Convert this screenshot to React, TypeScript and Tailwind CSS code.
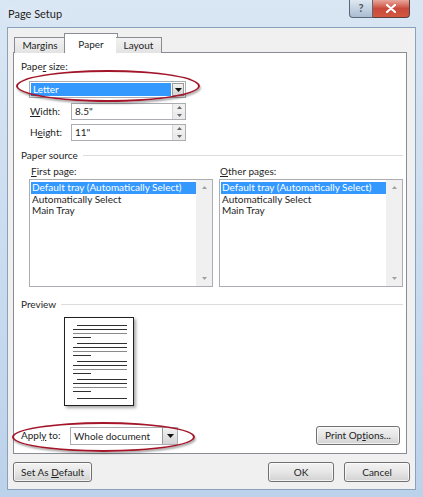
import React from 'react';

const btn =
  'flex items-center justify-center whitespace-nowrap rounded-[3px] border border-[#707070] bg-linear-to-b from-[#f3f3f3] via-[#e6e6e6] to-[#d2d2d2] text-[#1e1e1e] shadow-[inset_0_0_0_1px_rgba(255,255,255,0.7)]';

function DropArrow() {
  return (
    <svg width="7" height="4" viewBox="0 0 7 4">
      <path d="M0 0h7L3.5 4z" fill="#111" />
    </svg>
  );
}

function SpinBox({ value }: { value: string }) {
  return (
    <div className="flex h-[17px] w-[115px] border border-[#abadb3] bg-white">
      <span className="flex-1 pl-[3px] leading-[15px]">{value}</span>
      <div className="flex w-[13px] flex-col border-l border-[#d6d6d6]">
        <div className="flex flex-1 items-center justify-center bg-[#f0f0f0]">
          <svg width="5" height="3" viewBox="0 0 5 3">
            <path d="M0 3h5L2.5 0z" fill="#6a6a6a" />
          </svg>
        </div>
        <div className="flex flex-1 items-center justify-center bg-[#ebebeb]">
          <svg width="5" height="3" viewBox="0 0 5 3">
            <path d="M0 0h5L2.5 3z" fill="#6a6a6a" />
          </svg>
        </div>
      </div>
    </div>
  );
}

function TrayList({ width }: { width: string }) {
  return (
    <div className={`flex h-[108px] border border-[#abadb3] bg-white ${width}`}>
      <div className="flex-1 whitespace-nowrap pt-[2px] pl-px leading-[11.5px]">
        <div className="bg-[#3399ff] pl-px text-white">Default tray (Automatically Select)</div>
        <div className="pl-px">Automatically Select</div>
        <div className="pl-px">Main Tray</div>
      </div>
      <div className="flex w-[16px] flex-col items-center justify-between bg-[#f0f0f0] py-[6px]">
        <svg width="5" height="3" viewBox="0 0 5 3">
          <path d="M0 3h5L2.5 0z" fill="#a0a0a0" />
        </svg>
        <svg width="5" height="3" viewBox="0 0 5 3">
          <path d="M0 0h5L2.5 3z" fill="#a0a0a0" />
        </svg>
      </div>
    </div>
  );
}

function Group({ label }: { label: string }) {
  return (
    <div className="flex h-[16px] items-center pl-[7px] pr-[3px] text-[#1e1e1e]">
      <span>{label}</span>
      <div className="ml-[5px] h-px flex-1 bg-[#dcdcdc]" />
    </div>
  );
}

function PageLines() {
  return (
    <div className="flex flex-col pl-[8px] pt-[7px]">
      {[0, 1, 2, 3].map((p) => (
        <div key={p} className="mb-[5px] flex flex-col">
          <div className="ml-[4px] h-px w-[50px] bg-[#303030]" />
          <div className="mt-[3px] h-px w-[54px] bg-[#303030]" />
          <div className="mt-[2.5px] h-[1.5px] w-[54px] bg-[#8a8a8a]" />
          <div className="mt-[3px] h-px w-[18px] bg-[#303030]" />
        </div>
      ))}
      <div className="ml-[4px] mt-[1px] h-px w-[50px] bg-[#303030]" />
    </div>
  );
}

export default function App() {
  return (
    <div className="relative flex h-[497px] w-[423px] flex-col overflow-hidden bg-linear-to-b from-[#d9e6f4] to-[#bcd2ea] font-['Lato',sans-serif] text-[10px] text-[#1e1e1e]">
      {/* title bar */}
      <div className="flex h-[27px] shrink-0 items-start justify-between">
        <span className="mt-[6px] ml-[8px] text-[11px] text-[#1e1e1e] [text-shadow:0_0_8px_#fff]">
          Page Setup
        </span>
        <div className="mr-[13px] flex h-[18px]">
          <div className="flex w-[24px] items-center justify-center rounded-bl-[4px] border border-t-0 border-[#5b6878] bg-linear-to-b from-[#dfe8f2] to-[#a9bcd2] text-[11px] font-bold text-[#4a5564]">
            ?
          </div>
          <div className="flex w-[37px] items-center justify-center rounded-br-[4px] border border-t-0 border-l-0 border-[#5b3f3f] bg-linear-to-b from-[#e8a79c] via-[#c94a3c] to-[#d2583f]">
            <svg width="10" height="9" viewBox="0 0 10 9">
              <path d="M1 1l8 7M9 1l-8 7" stroke="#fff" strokeWidth="2.2" strokeLinecap="round" />
            </svg>
          </div>
        </div>
      </div>

      {/* client */}
      <div className="mx-[7px] mb-[7px] flex flex-1 flex-col border border-[#8aa1bb] bg-[#f0f0f0] pt-[5px]">
        {/* tabs */}
        <div className="relative z-10 flex h-[20px] items-end pl-[6px]">
          <div className="flex h-[16px] w-[52px] items-center justify-center border border-b-0 border-[#898c95] bg-linear-to-b from-[#f2f2f2] to-[#e3e3e3] pb-px">
            Margins
          </div>
          <div className="-mx-[2px] flex h-[20px] w-[54px] items-start justify-center border border-b-0 border-[#898c95] bg-white pt-[3px]">
            Paper
          </div>
          <div className="flex h-[16px] w-[46px] items-center justify-center border border-b-0 border-l-0 border-[#898c95] bg-linear-to-b from-[#f2f2f2] to-[#e3e3e3] pb-px">
            Layout
          </div>
        </div>

        {/* panel */}
        <div className="-mt-px ml-[5px] flex h-[402px] w-[394px] flex-col border border-[#898c95] bg-white">
          <div className="mt-[5px] h-[16px] pl-[7px] leading-[16px]">
            Pape<span className="underline">r</span> size:
          </div>
          <div className="ml-[15px] mt-[7px] flex h-[17px] w-[157px] border border-[#abadb3] bg-white p-px">
            <span className="flex-1 bg-[#3399ff] pl-[2px] leading-[13px] text-white">Letter</span>
            <div className="ml-px flex w-[12px] items-center justify-center border border-[#9a9a9a] bg-linear-to-b from-[#f2f2f2] to-[#d4d4d4]">
              <DropArrow />
            </div>
          </div>
          <div className="mt-[5px] flex items-center pl-[16px]">
            <span className="w-[41px]">
              <span className="underline">W</span>idth:
            </span>
            <SpinBox value={'8.5"'} />
          </div>
          <div className="mt-[4px] flex items-center pl-[16px]">
            <span className="w-[41px]">
              H<span className="underline">e</span>ight:
            </span>
            <SpinBox value={'11"'} />
          </div>

          <div className="mt-[6px]">
            <Group label="Paper source" />
          </div>
          <div className="flex h-[16px] items-center">
            <span className="w-[206px] pl-[17px]">
              <span className="underline">F</span>irst page:
            </span>
            <span>
              <span className="underline">O</span>ther pages:
            </span>
          </div>
          <div className="flex gap-[6px] pl-[15px]">
            <TrayList width="w-[184px]" />
            <TrayList width="w-[184px]" />
          </div>

          <div className="mt-[9px]">
            <Group label="Preview" />
          </div>
          <div className="ml-[50px] mt-[5px] h-[89px] w-[70px] border border-[#202020] bg-white shadow-[2px_2px_3px_rgba(0,0,0,0.35)]">
            <PageLines />
          </div>

          <div className="mt-[20px] flex items-center pl-[7px] pr-[6px]">
            <span className="w-[49px] whitespace-nowrap">
              Appl<span className="underline">y</span> to:
            </span>
            <div className="flex h-[18px] w-[108px] border border-[#abadb3] bg-white">
              <span className="flex-1 whitespace-nowrap pl-[3px] leading-[16px]">Whole document</span>
              <div className="flex w-[15px] items-center justify-center border-l border-[#9a9a9a] bg-linear-to-b from-[#f2f2f2] to-[#d4d4d4]">
                <DropArrow />
              </div>
            </div>
            <div className="flex-1" />
            <div className={`${btn} h-[19px] w-[84px]`}>
              Print Op<span className="underline">t</span>ions...
            </div>
          </div>
        </div>

        {/* bottom buttons */}
        <div className="mt-[8px] flex items-center pl-[5px] pr-[5px]">
          <div className={`${btn} h-[20px] w-[79px]`}>
            Set As&nbsp;<span className="underline">D</span>efault
          </div>
          <div className="flex-1" />
          <div className={`${btn} h-[20px] w-[66px] border-[#3c7fb1] shadow-[inset_0_0_0_1px_#7fd0f5]`}>OK</div>
          <div className={`${btn} ml-[10px] h-[20px] w-[66px]`}>Cancel</div>
        </div>
      </div>

      {/* annotations */}
      <div className="pointer-events-none absolute left-[16px] top-[70px] h-[32px] w-[184px] rounded-[50%] border-2 border-[#a3162a] shadow-[1px_2px_2px_rgba(0,0,0,0.3)]" />
      <div className="pointer-events-none absolute left-[12px] top-[422px] h-[30px] w-[183px] rounded-[50%] border-2 border-[#a3162a] shadow-[1px_2px_2px_rgba(0,0,0,0.3)]" />
    </div>
  );
}
